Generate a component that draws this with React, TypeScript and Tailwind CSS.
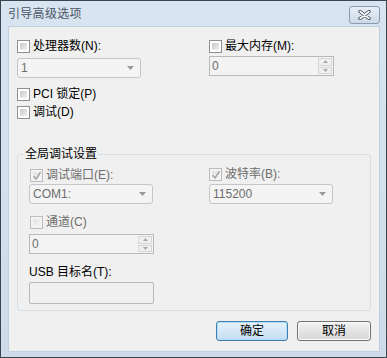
import React from "react";

const FONT = "font-['Liberation_Sans','Noto_Sans_CJK_SC',sans-serif]";

function Checkbox({ checked = false, disabled = false }: { checked?: boolean; disabled?: boolean }) {
  return (
    <span
      className={`relative flex h-[13px] w-[13px] shrink-0 border p-[2px] ${
        disabled ? "border-[#bcbcbc] bg-[#f4f4f4]" : "border-[#8f8f8f] bg-white"
      }`}
    >
      <span
        className={`flex-1 bg-gradient-to-br ${
          disabled ? "from-[#e2e2e2] to-[#f4f4f4]" : "from-[#c9c9c9] to-[#f2f2f2]"
        }`}
      />
      {checked && (
        <svg className="absolute left-[1px] top-[1px]" width="10" height="10" viewBox="0 0 10 10">
          <path d="M1.5 5.2 L4 8 L8.6 1.2" fill="none" stroke="#a8a8a8" strokeWidth="1.6" />
        </svg>
      )}
    </span>
  );
}

function CheckLabel({
  label,
  checked,
  disabled,
  boxDisabled,
}: {
  label: string;
  checked?: boolean;
  disabled?: boolean;
  boxDisabled?: boolean;
}) {
  return (
    <div className="flex h-[13px] items-center gap-[3px]">
      <Checkbox checked={checked} disabled={boxDisabled} />
      <span className={`whitespace-nowrap text-[12px] leading-[13px] ${disabled ? "text-[#6d6d6d]" : "text-black"}`}>
        {label}
      </span>
    </div>
  );
}

function Combo({ value }: { value: string }) {
  return (
    <div className="flex h-[20px] w-[124px] items-center justify-between rounded-[3px] border border-[#c6c6c6] bg-[#f4f4f4] pl-[3px] pr-[6px]">
      <span className="text-[12px] leading-[14px] text-[#6d6d6d]">{value}</span>
      <svg width="7" height="4" viewBox="0 0 7 4">
        <path d="M0 0 H7 L3.5 4 Z" fill="#9a9a9a" />
      </svg>
    </div>
  );
}

function Spin({ value }: { value: string }) {
  return (
    <div className="flex h-[20px] w-[125px] border border-[#b9b9b9] bg-[#f3f3f3]">
      <span className="flex-1 pl-[2px] text-[12px] leading-[18px] text-[#6d6d6d]">{value}</span>
      <div className="flex w-[16px] flex-col gap-[1px] p-[1px]">
        <div className="flex flex-1 items-center justify-center border border-[#d6d6d6] bg-[#f0f0f0]">
          <svg width="5" height="3" viewBox="0 0 5 3">
            <path d="M0 3 H5 L2.5 0 Z" fill="#a8a8a8" />
          </svg>
        </div>
        <div className="flex flex-1 items-center justify-center border border-[#d6d6d6] bg-[#f0f0f0]">
          <svg width="5" height="3" viewBox="0 0 5 3">
            <path d="M0 0 H5 L2.5 3 Z" fill="#a8a8a8" />
          </svg>
        </div>
      </div>
    </div>
  );
}

export default function App() {
  return (
    <div className={`${FONT} flex h-[358px] w-[387px] flex-col border border-[#3a4550] bg-gradient-to-b from-[#d9e4f1] to-[#cddbea]`}>
      {/* Title bar */}
      <div className="flex h-[25px] shrink-0 items-start justify-between pl-[7px] pr-[6px]">
        <span className="mt-[6px] text-[12px] leading-[14px] tracking-[0.3px] text-[#4a5664]">引导高级选项</span>
        <button className="mt-[5px] flex h-[18px] w-[31px] items-center justify-center rounded-[3px] border border-[#8d9bb0] bg-gradient-to-b from-[#e8eef6] to-[#cdd9e8]">
          <svg width="13" height="10" viewBox="0 0 13 10">
            <path d="M2 1.5 L11 8.5 M11 1.5 L2 8.5" stroke="#3f4a58" strokeWidth="3.4" strokeLinecap="round" />
            <path d="M2 1.5 L11 8.5 M11 1.5 L2 8.5" stroke="#ffffff" strokeWidth="1.6" strokeLinecap="round" />
          </svg>
        </button>
      </div>

      {/* Client area */}
      <div className="ml-[7px] flex h-[326px] w-[372px] flex-col border border-[#c2d0e0] bg-[#f0f0f0]">
        <div className="mt-[13px] grid grid-cols-[200px_1fr]">
          <div className="flex flex-col pl-[8px]">
            <CheckLabel label="处理器数(N):" />
            <div className="mt-[5px]">
              <Combo value="1" />
            </div>
            <div className="mt-[10px]">
              <CheckLabel label="PCI 锁定(P)" />
            </div>
            <div className="mt-[5px]">
              <CheckLabel label="调试(D)" />
            </div>
          </div>
          <div className="flex flex-col">
            <CheckLabel label="最大内存(M):" />
            <div className="mt-[3px]">
              <Spin value="0" />
            </div>
          </div>
        </div>

        {/* Group box */}
        <div className="relative ml-[8px] mt-[35px] h-[157px] w-[354px] rounded-[3px] border border-[#d5dfe5]">
          <span className="absolute left-[6px] top-[-8px] bg-[#f0f0f0] px-[1px] text-[12px] leading-[14px] text-black">
            全局调试设置
          </span>
          <div className="mt-[13px] grid grid-cols-[191px_1fr]">
            <div className="flex flex-col pl-[11px]">
              <div className="ml-[1px] mt-[1px]">
                <CheckLabel label="调试端口(E):" checked disabled boxDisabled />
              </div>
              <div className="mt-[2px]">
                <Combo value="COM1:" />
              </div>
              <div className="ml-[1px] mt-[12px]">
                <CheckLabel label="通道(C)" disabled boxDisabled />
              </div>
              <div className="mt-[5px]">
                <Spin value="0" />
              </div>
              <span className="mt-[12px] text-[12px] leading-[13px] text-black">USB 目标名(T):</span>
              <div className="mt-[3px] h-[22px] w-[125px] rounded-[2px] border border-[#b8b8b8] bg-[#f0f0f0]" />
            </div>
            <div className="flex flex-col">
              <CheckLabel label="波特率(B):" checked disabled boxDisabled />
              <div className="mt-[3px]">
                <Combo value="115200" />
              </div>
            </div>
          </div>
        </div>

        {/* Buttons */}
        <div className="mt-[10px] flex justify-end gap-[9px] pr-[8px]">
          <button className="h-[20px] w-[72px] rounded-[3px] border border-[#3c7fb1] bg-gradient-to-b from-[#e5f1fb] to-[#c4def2] text-[12px] leading-[14px] text-black shadow-[inset_0_0_0_1px_#b6dcf4]">
            确定
          </button>
          <button className="h-[20px] w-[74px] rounded-[3px] border border-[#707070] bg-gradient-to-b from-[#f2f2f2] to-[#d6d6d6] text-[12px] leading-[14px] text-black shadow-[inset_0_0_0_1px_#fcfcfc]">
            取消
          </button>
        </div>
      </div>
    </div>
  );
}
